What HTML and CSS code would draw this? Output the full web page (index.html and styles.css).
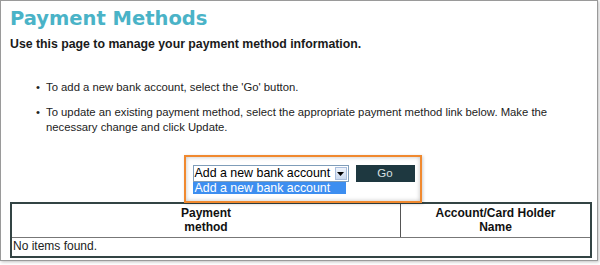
FILE: index.html
```html
<!DOCTYPE html>
<html>
<head>
<meta charset="utf-8">
<link rel="stylesheet" href="styles.css">
</head>
<body>
<div class="frame">
  <h1 class="title">Payment Methods</h1>
  <p class="intro">Use this page to manage your payment method information.</p>
  <ul class="tips">
    <li>To add a new bank account, select the 'Go' button.</li>
    <li>To update an existing payment method, select the appropriate payment method link below. Make the necessary change and click Update.</li>
  </ul>
  <div class="action-row">
    <div class="highlight">
      <div class="picker">
        <div class="select">
          <span class="select-text">Add a new bank account</span>
          <span class="select-arrow"><svg width="7" height="4" viewBox="0 0 7 4"><path d="M0 0h7L3.5 4z" fill="#000"/></svg></span>
        </div>
        <div class="option">Add a new bank account</div>
      </div>
      <div class="go">Go</div>
    </div>
  </div>
  <table class="grid">
    <thead>
      <tr><th class="col1">Payment<br>method</th><th class="col2">Account/Card Holder<br>Name</th></tr>
    </thead>
    <tbody>
      <tr><td colspan="2">No items found.</td></tr>
    </tbody>
  </table>
</div>
</body>
</html>
```
FILE: styles.css
```css
html, body { margin: 0; padding: 0; background: #fff; }
body { width: 600px; height: 265px; overflow: hidden; font-family: "Liberation Sans", Arial, sans-serif; color: #111; }
.frame {
  width: 587px; height: 259px;
  border: 1px solid #9a9a9a;
  box-shadow: 1px 1px 3px rgba(0,0,0,0.25);
  padding: 0 0 0 9px;
  box-sizing: content-box;
}
.title {
  margin: 6px 0 0 0;
  font-family: "DejaVu Sans", Verdana, sans-serif;
  font-weight: bold;
  font-size: 19.5px;
  line-height: 24px;
  color: #4ab3c7;
}
.intro {
  margin: 6px 0 0 0;
  font-weight: bold;
  font-size: 12.3px;
  line-height: 14px;
  color: #1a1a1a;
}
.tips {
  margin: 29px 0 0 0;
  padding: 0 0 0 36px;
  font-size: 11.3px;
  line-height: 15px;
  color: #222;
  list-style: none;
}
.tips li { position: relative; margin-bottom: 10px; }
.tips li::before { content: "•"; position: absolute; left: -10px; }
.action-row { display: flex; justify-content: center; margin-top: 20px; }
.highlight {
  border: 2px solid #f0892f;
  box-shadow: inset 0 0 4px rgba(0,0,0,0.25), 1px 1px 3px rgba(0,0,0,0.2);
  padding: 8px 5px 7px 7px;
  display: flex;
  align-items: flex-start;
  gap: 7px;
  position: relative;
  z-index: 2;
  background: #fff;
  transform: translateX(-1px);
}
.picker { display: flex; flex-direction: column; }
.select {
  width: 156px; height: 17px;
  border: 1px solid #7f9db9;
  box-sizing: border-box;
  display: flex; align-items: center;
  background: #fff;
}
.select-text { flex: 1; font-size: 12.4px; padding-left: 1px; line-height: 15px; color: #000; white-space: nowrap; overflow: hidden; }
.select-arrow {
  flex: none;
  width: 12px; height: 13px; margin-right: 1px;
  background: linear-gradient(#eef3fb, #c9d8ee);
  border: 1px solid #a9bedd;
  box-sizing: border-box;
  display: flex; align-items: center; justify-content: center;
}
.option {
  width: 153px; height: 12px;
  background: #3d8ef0;
  color: #fff;
  font-size: 12.4px; line-height: 12px;
  padding-left: 2px;
  box-sizing: border-box;
  white-space: nowrap;
}
.go {
  width: 59px; height: 17px;
  background: #1e3840;
  color: #d8e0e0;
  font-size: 11.5px; line-height: 17px;
  text-align: center;
}
.grid {
  margin-top: -1px;
  width: 582px;
  border-collapse: separate;
  border-spacing: 0;
  border: 2px solid #334444;
  font-size: 12px;
  position: relative;
  z-index: 1;
}
.grid th {
  font-weight: bold;
  line-height: 14px;
  padding: 2px 0 3px;
  color: #111;
}
.col1 { width: 388px; border-right: 1px solid #555; }
.grid td {
  border-top: 1px solid #777;
  padding: 2px 1px 3px;
  line-height: 13px;
  color: #222;
}
```
